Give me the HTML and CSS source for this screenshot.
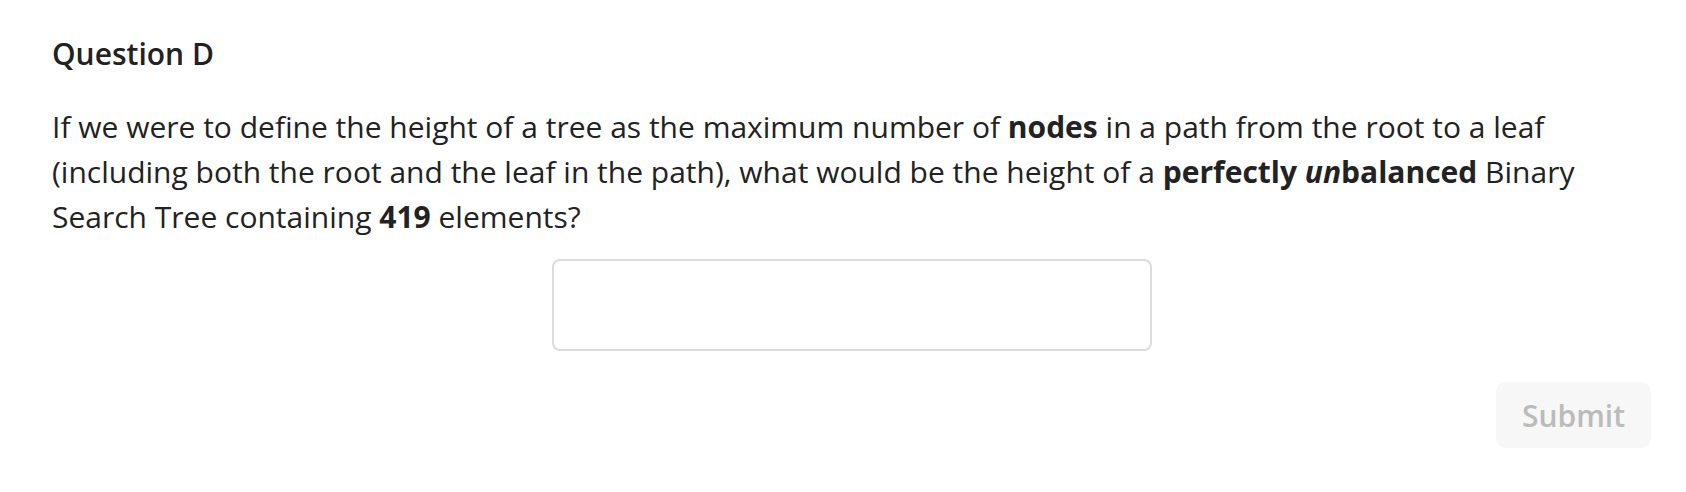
FILE: index.html
```html
<!DOCTYPE html>
<html lang="en">
<head>
  <meta charset="UTF-8">
  <title>Question D</title>
  <link rel="stylesheet" href="styles.css">
</head>
<body>
  <div class="question">
    <div class="question-title">Question D</div>
    <p class="question-text">
      If we were to define the height of a tree as the maximum number of <b>nodes</b> in a path from the root to a leaf
      (including both the root and the leaf in the path), what would be the height of a <b>perfectly <i>un</i>balanced</b> Binary
      Search Tree containing <b>419</b> elements?
    </p>
    <div class="answer-row">
      <input type="text" class="answer-input">
    </div>
    <div class="button-row">
      <button class="submit-button" disabled>Submit</button>
    </div>
  </div>
</body>
</html>
```

FILE: styles.css
```css
body {
  margin: 0;
  font-family: "Open Sans", "Noto Sans", sans-serif;
  color: #222;
  background-color: #fff;
}
.question {
  padding: 31px 35px 0 52px;
}
.question-title {
  font-size: 30px;
  font-weight: 600;
  line-height: 45px;
  margin-bottom: 28px;
}
.question-text {
  margin: 0;
  font-size: 30px;
  line-height: 45px;
}
.question-text b {
  font-weight: 700;
}
.answer-row {
  display: flex;
  justify-content: center;
  margin-top: 20px;
}
.answer-input {
  width: 600px;
  height: 92px;
  box-sizing: border-box;
  border: 2px solid #dcdcdc;
  border-radius: 8px;
  background-color: #fff;
  font-family: inherit;
  font-size: 30px;
  padding: 0 16px;
}
.button-row {
  display: flex;
  justify-content: flex-end;
  margin-top: 31px;
}
.submit-button {
  width: 155px;
  height: 66px;
  border: none;
  border-radius: 10px;
  background-color: #f7f7f7;
  color: #bbb;
  font-family: inherit;
  font-size: 30px;
  font-weight: 600;
  padding: 0;
}
```
